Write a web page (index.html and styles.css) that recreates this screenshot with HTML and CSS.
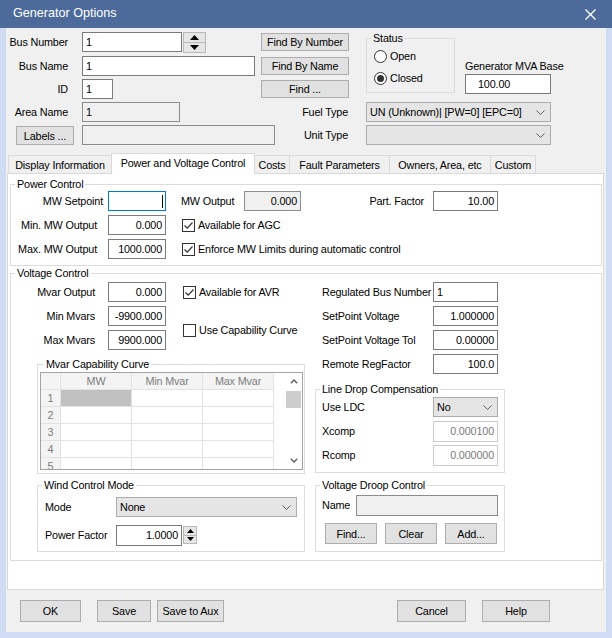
FILE: index.html
```html
<!DOCTYPE html>
<html>
<head>
<meta charset="utf-8">
<title>Generator Options</title>
<link rel="stylesheet" href="styles.css">
</head>
<body>
<div class="window">
  <header class="titlebar">
    <span class="title">Generator Options</span>
    <svg class="close" width="11" height="11" viewBox="0 0 11 11"><path d="M0.5 0.5 L10.5 10.5 M10.5 0.5 L0.5 10.5" stroke="#fff" stroke-width="1.3" fill="none"/></svg>
  </header>
  <div class="frame">
    <section class="top">
      <div class="tlabel gr1">Bus Number</div>
      <div class="spinfield gr1 gc2">
        <div class="field w100">1</div>
        <div class="spin spin-big">
          <div class="spin-btn"><svg width="9" height="5" viewBox="0 0 9 5"><path d="M0 5 L4.5 0 L9 5Z" fill="#000"/></svg></div>
          <div class="spin-btn"><svg width="9" height="5" viewBox="0 0 9 5"><path d="M0 0 L4.5 5 L9 0Z" fill="#000"/></svg></div>
        </div>
      </div>
      <div class="btn find gr1 gc3">Find By Number</div>

      <div class="group status">
        <span class="gtitle">Status</span>
        <div class="radio-row"><span class="radio"></span>Open</div>
        <div class="radio-row"><span class="radio on"></span>Closed</div>
      </div>
      <div class="mva">
        <div class="mva-label">Generator MVA Base</div>
        <div class="field w86 mva-field">100.00</div>
      </div>

      <div class="tlabel gr2">Bus Name</div>
      <div class="field w173 gr2 gc2">1</div>
      <div class="btn find gr2 gc3">Find By Name</div>

      <div class="tlabel gr3">ID</div>
      <div class="field w31 gr3 gc2">1</div>
      <div class="btn find gr3 gc3">Find ...</div>

      <div class="tlabel gr4">Area Name</div>
      <div class="field ro w98 gr4 gc2">1</div>
      <div class="tlabel2 gr4">Fuel Type</div>
      <div class="combo w185 gr4 gc45"><span>UN (Unknown)| [PW=0] [EPC=0]</span><svg width="9" height="5" viewBox="0 0 9 5"><path d="M0.5 0.5 L4.5 4.5 L8.5 0.5" fill="none" stroke="#606060"/></svg></div>

      <div class="btn labels gr5">Labels ...</div>
      <div class="field ro w193 gr5 gc23"></div>
      <div class="tlabel2 gr5">Unit Type</div>
      <div class="combo w185 gr5 gc45"><span></span><svg width="9" height="5" viewBox="0 0 9 5"><path d="M0.5 0.5 L4.5 4.5 L8.5 0.5" fill="none" stroke="#606060"/></svg></div>
    </section>

    <nav class="tabs">
      <div class="tab t-display">Display Information</div>
      <div class="tab active t-power">Power and Voltage Control</div>
      <div class="tab t-costs">Costs</div>
      <div class="tab t-fault">Fault Parameters</div>
      <div class="tab t-owners">Owners, Area, etc</div>
      <div class="tab t-custom">Custom</div>
    </nav>

    <main class="panel">
      <div class="group wide">
        <span class="gtitle">Power Control</span>
        <div class="pc-grid">
          <div class="plabel pr5 gr1 gc1">MW Setpoint</div>
          <div class="field focus gr1 gc2"><span class="caret"></span></div>
          <div class="llabel gr1 gc4">MW Output</div>
          <div class="field ro num gr1 gc5">0.000</div>
          <div class="plabel pr9 gr1 gc6">Part. Factor</div>
          <div class="field num gr1 gc7">10.00</div>

          <div class="plabel pr11 gr2 gc1">Min. MW Output</div>
          <div class="field num gr2 gc2">0.000</div>
          <div class="check gr2 gc4-8"><span class="box"><svg width="11" height="11" viewBox="0 0 11 11"><path d="M1.5 5.5 L4.2 8.2 L9.5 2.5" fill="none" stroke="#333" stroke-width="1.2"/></svg></span>Available for AGC</div>

          <div class="plabel pr11 gr3 gc1">Max. MW Output</div>
          <div class="field num gr3 gc2">1000.000</div>
          <div class="check gr3 gc4-8"><span class="box"><svg width="11" height="11" viewBox="0 0 11 11"><path d="M1.5 5.5 L4.2 8.2 L9.5 2.5" fill="none" stroke="#333" stroke-width="1.2"/></svg></span>Enforce MW Limits during automatic control</div>
        </div>
      </div>

      <div class="group wide voltage">
        <span class="gtitle">Voltage Control</span>
        <div class="vc-body">
          <div class="vleft">
            <div class="vrows">
              <div class="plabel pr13 gr1 gc1">Mvar Output</div>
              <div class="field num gr1 gc2">0.000</div>
              <div class="check gr1 gc4"><span class="box"><svg width="11" height="11" viewBox="0 0 11 11"><path d="M1.5 5.5 L4.2 8.2 L9.5 2.5" fill="none" stroke="#333" stroke-width="1.2"/></svg></span>Available for AVR</div>
              <div class="plabel pr13 gr2 gc1">Min Mvars</div>
              <div class="field num gr2 gc2">-9900.000</div>
              <div class="check ucc gc4"><span class="box"></span>Use Capability Curve</div>
              <div class="plabel pr13 gr3 gc1">Max Mvars</div>
              <div class="field num gr3 gc2">9900.000</div>
            </div>
            <div class="group curve">
              <span class="gtitle">Mvar Capability Curve</span>
              <div class="cgrid">
                <div class="ctable">
                  <div class="cell head"></div><div class="cell head">MW</div><div class="cell head">Min Mvar</div><div class="cell head">Max Mvar</div><div class="blank"></div>
                  <div class="cell rowh">1</div><div class="cell sel"></div><div class="cell"></div><div class="cell"></div><div class="blank"></div>
                  <div class="cell rowh">2</div><div class="cell"></div><div class="cell"></div><div class="cell"></div><div class="blank"></div>
                  <div class="cell rowh">3</div><div class="cell"></div><div class="cell"></div><div class="cell"></div><div class="blank"></div>
                  <div class="cell rowh">4</div><div class="cell"></div><div class="cell"></div><div class="cell"></div><div class="blank"></div>
                  <div class="cell rowh">5</div><div class="cell"></div><div class="cell"></div><div class="cell"></div><div class="blank"></div>
                </div>
                <div class="vscroll">
                  <div class="sarrow"><svg width="8" height="5" viewBox="0 0 8 5"><path d="M0.8 4.2 L4 1 L7.2 4.2" fill="none" stroke="#606060" stroke-width="1.4"/></svg></div>
                  <div class="thumb"></div>
                  <div class="strack"></div>
                  <div class="sarrow"><svg width="8" height="5" viewBox="0 0 8 5"><path d="M0.8 0.8 L4 4 L7.2 0.8" fill="none" stroke="#606060" stroke-width="1.4"/></svg></div>
                </div>
              </div>
            </div>
          </div>

          <div class="vright">
            <div class="rrows">
              <div class="rlabel">Regulated Bus Number</div>
              <div class="field">1</div>
              <div class="rlabel">SetPoint Voltage</div>
              <div class="field num">1.000000</div>
              <div class="rlabel">SetPoint Voltage Tol</div>
              <div class="field num">0.00000</div>
              <div class="rlabel">Remote RegFactor</div>
              <div class="field num">100.0</div>
            </div>
            <div class="group ldc">
              <span class="gtitle">Line Drop Compensation</span>
              <div class="ldc-grid">
                <div class="rlabel sm">Use LDC</div>
                <div class="combo h21"><span>No</span><svg width="9" height="5" viewBox="0 0 9 5"><path d="M0.5 0.5 L4.5 4.5 L8.5 0.5" fill="none" stroke="#606060"/></svg></div>
                <div class="rlabel sm">Xcomp</div>
                <div class="field num dis h21">0.000100</div>
                <div class="rlabel sm">Rcomp</div>
                <div class="field num dis h21">0.000000</div>
              </div>
            </div>
          </div>

          <div class="group wind">
            <span class="gtitle">Wind Control Mode</span>
            <div class="wind-grid">
              <div class="rlabel wl">Mode</div>
              <div class="combo w181 h21"><span>None</span><svg width="9" height="5" viewBox="0 0 9 5"><path d="M0.5 0.5 L4.5 4.5 L8.5 0.5" fill="none" stroke="#606060"/></svg></div>
              <div class="rlabel wl">Power Factor</div>
              <div class="spinfield">
                <div class="field num w66 h21">1.0000</div>
                <div class="spin spin-small">
                  <div class="spin-btn"><svg width="7" height="4" viewBox="0 0 7 4"><path d="M0 4 L3.5 0 L7 4Z" fill="#000"/></svg></div>
                  <div class="spin-btn"><svg width="7" height="4" viewBox="0 0 7 4"><path d="M0 0 L3.5 4 L7 0Z" fill="#000"/></svg></div>
                </div>
              </div>
            </div>
          </div>

          <div class="group droop">
            <span class="gtitle">Voltage Droop Control</span>
            <div class="droop-grid">
              <div class="rlabel sm">Name</div>
              <div class="field ro h21"></div>
              <div class="droop-btns">
                <div class="btn dbtn">Find...</div>
                <div class="btn dbtn">Clear</div>
                <div class="btn dbtn">Add...</div>
              </div>
            </div>
          </div>
        </div>
      </div>
    </main>

    <footer class="footer">
      <div class="btn fbtn f-ok">OK</div>
      <div class="btn fbtn f-save">Save</div>
      <div class="btn fbtn f-aux">Save to Aux</div>
      <div class="spacer"></div>
      <div class="btn fbtn f-cancel">Cancel</div>
      <div class="btn fbtn f-help">Help</div>
    </footer>
  </div>
</div>
</body>
</html>
```

FILE: styles.css
```css
* { box-sizing: border-box; }

body {
  margin: 0;
  background: #cfdcf3;
  font-family: "Liberation Sans", Arial, sans-serif;
  font-size: 10.8px;
  letter-spacing: -0.15px;
  color: #000;
}

.window {
  width: 612px;
  height: 638px;
  display: flex;
  flex-direction: column;
}

.titlebar {
  height: 28px;
  flex: none;
  background: #4c6b9b;
  color: #fff;
  display: flex;
  align-items: center;
  justify-content: space-between;
  padding: 0 16px 3px 13px;
}
.title { font-size: 12.6px; letter-spacing: 0; }
.close { margin-top: 3px; }

.frame {
  flex: 1;
  margin: 0 6px 6px;
  background: #f0f0f0;
  display: flex;
  flex-direction: column;
}

/* grid helpers */
.gr1 { grid-row: 1; }
.gr2 { grid-row: 2; }
.gr3 { grid-row: 3; }
.gr4 { grid-row: 4; }
.gr5 { grid-row: 5; }
.gc1 { grid-column: 1; }
.gc2 { grid-column: 2; }
.gc3 { grid-column: 3; }
.gc4 { grid-column: 4; }
.gc5 { grid-column: 5; }
.gc6 { grid-column: 6; }
.gc7 { grid-column: 7; }
.gc23 { grid-column: 2 / 4; }
.gc45 { grid-column: 4 / 6; }
.gc4-8 { grid-column: 4 / 8; }

/* generic controls */
.field {
  height: 20px;
  border: 1px solid #7a7a7a;
  background: #fff;
  line-height: 18px;
  padding: 0 3px;
  white-space: nowrap;
  overflow: hidden;
}
.field.num { text-align: right; }
.field.ro { background: #f0f0f0; border-color: #8c8c8c; }
.field.dis { border-color: #cccccc; color: #7a7a7a; }
.field.focus {
  border-color: #0078d7;
  display: flex;
  align-items: center;
  justify-content: flex-end;
  padding-right: 2px;
}
.caret { width: 1px; height: 13px; background: #000; }
.h21 { height: 21px; line-height: 19px; }

.w31 { width: 31px; }
.w66 { width: 66px; }
.w86 { width: 86px; }
.w98 { width: 98px; }
.w100 { width: 100px; }
.w173 { width: 173px; }
.w181 { width: 181px; }
.w185 { width: 185px; }
.w193 { width: 193px; }

.btn {
  background: #e1e1e1;
  border: 1px solid #adadad;
  display: flex;
  align-items: center;
  justify-content: center;
  white-space: nowrap;
}

.combo {
  height: 20px;
  background: #e5e5e5;
  border: 1px solid #acacac;
  display: flex;
  align-items: center;
  justify-content: space-between;
  padding: 0 5px 0 3px;
  white-space: nowrap;
}

.spinfield { display: flex; align-items: flex-start; }
.spin { display: flex; flex-direction: column; margin-left: 1px; }
.spin-btn {
  flex: 1;
  background: #e6e6e6;
  border: 1px solid #b9b9b9;
  display: flex;
  align-items: center;
  justify-content: center;
}
.spin-big { width: 23px; height: 21px; }
.spin-big .spin-btn + .spin-btn { border-top: none; }
.spin-small { width: 14px; height: 18px; margin-top: 1px; }
.spin-small .spin-btn + .spin-btn { border-top: none; }

.group { border: 1px solid #dcdcdc; }
.gtitle {
  display: block;
  width: max-content;
  margin: -7px 0 0 4px;
  padding: 0 2px;
  line-height: 13px;
  background: #fff;
  white-space: nowrap;
}

.check { display: flex; align-items: center; white-space: nowrap; }
.box {
  width: 13px;
  height: 13px;
  border: 1px solid #333;
  background: #fff;
  margin: 0 3px 0 1px;
  display: flex;
  align-items: center;
  justify-content: center;
}

/* top section */
.top {
  display: grid;
  grid-template-columns: 76px 179px 105px 99px 86px;
  grid-template-rows: 21px 20px 20px 20px 20px;
  row-gap: 3px;
  padding-top: 4px;
  align-items: start;
}
.tlabel {
  grid-column: 1;
  text-align: right;
  padding-right: 14px;
  line-height: 20px;
  white-space: nowrap;
}
.tlabel2 {
  grid-column: 3;
  text-align: right;
  padding-right: 18px;
  line-height: 20px;
  white-space: nowrap;
}
.find { width: 88px; height: 18px; margin-top: 1px; }
.labels { grid-column: 1; width: 58px; height: 19px; margin: 1px 0 0 10px; }

.status {
  grid-column: 4;
  grid-row: 1 / 4;
  width: 89px;
  height: 55px;
  margin-top: 6px;
  padding: 3px 0 0 7px;
  display: flex;
  flex-direction: column;
  gap: 6px;
}
.status .gtitle { background: #f0f0f0; margin-left: -3px; margin-top: -10px; margin-bottom: -3px; }
.radio-row { display: flex; align-items: center; height: 16px; }
.radio {
  width: 13px;
  height: 13px;
  border-radius: 50%;
  border: 1px solid #333;
  background: #fff;
  margin-right: 3px;
  display: flex;
  align-items: center;
  justify-content: center;
}
.radio.on::after {
  content: "";
  width: 7px;
  height: 7px;
  border-radius: 50%;
  background: #333;
}

.mva {
  grid-column: 5;
  grid-row: 2 / 4;
  display: flex;
  flex-direction: column;
}
.mva-label { line-height: 13px; margin-top: 4px; white-space: nowrap; }
.mva-field { margin-top: 1px; padding-left: 12px; }

/* tabs */
.tabs {
  display: flex;
  height: 20px;
  margin-top: 8px;
  padding-left: 2px;
  align-items: flex-start;
  flex: none;
}
.tab {
  height: 18px;
  margin-top: 2px;
  margin-right: -1px;
  border: 1px solid #d9d9d9;
  border-bottom: none;
  background: #f0f0f0;
  display: flex;
  align-items: center;
  justify-content: center;
  white-space: nowrap;
}
.tab.active {
  height: 21px;
  margin-top: 0;
  background: #fff;
  position: relative;
  z-index: 2;
  padding-bottom: 2px;
}
.t-display { width: 104px; }
.t-power { width: 144px; }
.t-costs { width: 36px; }
.t-fault { width: 101px; }
.t-owners { width: 102px; }
.t-custom { width: 46px; }

/* panel */
.panel {
  flex: none;
  margin-left: 1px;
  width: 597px;
  height: 417px;
  background: #fff;
  border: 1px solid #d9d9d9;
  padding: 10px 0 0 2px;
}
.group.wide { width: 592px; }
.voltage { margin-top: 7px; }

.pc-grid {
  display: grid;
  grid-template-columns: 97px 58px 15px 63px 57px 132px 65px;
  grid-template-rows: 20px 20px 20px;
  row-gap: 4px;
  padding-bottom: 6px;
}
.plabel { text-align: right; line-height: 20px; white-space: nowrap; }
.pr5 { padding-right: 5px; }
.pr9 { padding-right: 9px; }
.pr11 { padding-right: 11px; }
.pr13 { padding-right: 13px; }
.llabel { line-height: 20px; white-space: nowrap; }

.vc-body {
  display: grid;
  grid-template-columns: 294px 190px;
  column-gap: 10px;
  row-gap: 11px;
  padding: 2px 0 8px;
  align-items: start;
}
.vrows {
  display: grid;
  grid-template-columns: 97px 58px 17px auto;
  grid-template-rows: 20px 20px 20px;
  row-gap: 4px;
}
.vrows .box { margin-left: 0; }
.ucc { grid-row: 2 / 4; align-self: center; margin-top: 4px; }

.curve {
  width: 268px;
  margin: 14px 0 0 26px;
  padding: 0 0 3px 2px;
}
.cgrid {
  margin-top: 1px;
  width: 263px;
  height: 98px;
  border: 1px solid #a3a3a3;
  display: flex;
  background: #fff;
}
.ctable {
  width: 244px;
  height: 96px;
  overflow: hidden;
  display: grid;
  grid-template-columns: 20px 71px 71px 71px 11px;
  grid-auto-rows: 17px;
}
.cell {
  border-right: 1px solid #e2e2e2;
  border-bottom: 1px solid #e2e2e2;
  color: #7c7c7c;
  line-height: 16px;
  text-align: center;
}
.cell.head { background: #f4f4f4; }
.cell.rowh { background: #f4f4f4; }
.cell.sel { background: #c1c1c1; }
.vscroll {
  width: 17px;
  display: flex;
  flex-direction: column;
  align-items: center;
}
.sarrow { height: 17px; width: 17px; display: flex; align-items: center; justify-content: center; }
.thumb { width: 15px; height: 17px; background: #cdcdcd; margin-top: 1px; }
.strack { flex: 1; }

.rrows {
  display: grid;
  grid-template-columns: 118px 65px;
  grid-template-rows: 20px 20px 20px 20px;
  row-gap: 4px;
}
.rlabel { padding-left: 7px; line-height: 20px; white-space: nowrap; }
.rlabel.sm { padding-left: 6px; line-height: 21px; }
.ldc { width: 190px; margin-top: 15px; }
.ldc-grid {
  display: grid;
  grid-template-columns: 117px 65px;
  grid-template-rows: 21px 21px 21px;
  row-gap: 3px;
  padding: 1px 0 6px;
}

.wind { width: 268px; margin-left: 26px; }
.wind-grid {
  display: grid;
  grid-template-columns: 78px auto;
  grid-template-rows: 21px 21px;
  row-gap: 7px;
  padding: 5px 0 5px;
}
.rlabel.wl { line-height: 21px; }

.droop { width: 190px; }
.droop-grid {
  display: grid;
  grid-template-columns: 40px 142px;
  grid-template-rows: 21px 21px;
  row-gap: 7px;
  padding: 3px 0 7px;
}
.droop-btns {
  grid-column: 1 / 3;
  display: flex;
  gap: 8px;
  padding-left: 9px;
}
.dbtn { width: 52px; height: 21px; }

/* footer */
.footer {
  display: flex;
  padding: 10px 56px 0 14px;
}
.fbtn { height: 22px; }
.f-ok { width: 61px; }
.f-save { width: 54px; margin-left: 16px; }
.f-aux { width: 67px; margin-left: 6px; }
.spacer { flex: 1; }
.f-cancel { width: 69px; }
.f-help { width: 68px; margin-left: 16px; }
```
